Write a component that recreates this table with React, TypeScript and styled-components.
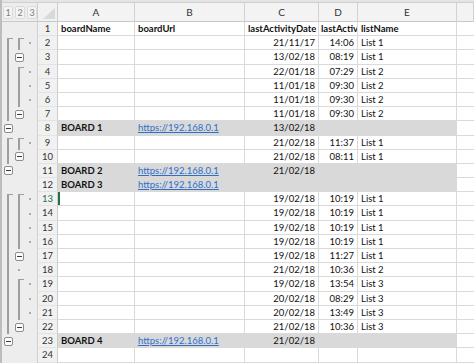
import * as React from 'react';
import styled, { createGlobalStyle } from 'styled-components';

const ROW_H = 14.2;
const COLS = '36px 20px 77px 110px 74px 39px 99px 1fr';
const URL = 'https://192.168.0.1';

type Mark = 'none' | 'start' | 'line' | 'minus' | 'dot';

type RowData = {
  n: number;
  a?: string;
  b?: string;
  c?: string;
  d?: string;
  e?: string;
  band?: boolean;
  header?: boolean;
  active?: boolean;
  o: [Mark, Mark, Mark];
};

// row 1 holds the column names, D's is cut by the narrow column
const rows: RowData[] = [
  { n: 1, header: true, a: 'boardName', b: 'boardUrl', c: 'lastActivityDate', d: 'lastActivi', e: 'listName', o: ['none', 'none', 'none'] },
  { n: 2, c: '21/11/17', d: '14:06', e: 'List 1', o: ['start', 'start', 'dot'] },
  { n: 3, c: '13/02/18', d: '08:19', e: 'List 1', o: ['line', 'minus', 'none'] },
  { n: 4, c: '22/01/18', d: '07:29', e: 'List 2', o: ['line', 'start', 'dot'] },
  { n: 5, c: '11/01/18', d: '09:30', e: 'List 2', o: ['line', 'line', 'dot'] },
  { n: 6, c: '11/01/18', d: '09:30', e: 'List 2', o: ['line', 'line', 'dot'] },
  { n: 7, c: '11/01/18', d: '09:30', e: 'List 2', o: ['line', 'minus', 'none'] },
  { n: 8, a: 'BOARD 1', b: URL, c: '13/02/18', band: true, o: ['minus', 'none', 'none'] },
  { n: 9, c: '21/02/18', d: '11:37', e: 'List 1', o: ['start', 'start', 'dot'] },
  { n: 10, c: '21/02/18', d: '08:11', e: 'List 1', o: ['line', 'minus', 'none'] },
  { n: 11, a: 'BOARD 2', b: URL, c: '21/02/18', band: true, o: ['minus', 'none', 'none'] },
  { n: 12, a: 'BOARD 3', b: URL, band: true, o: ['none', 'none', 'none'] },
  { n: 13, c: '19/02/18', d: '10:19', e: 'List 1', active: true, o: ['start', 'start', 'dot'] },
  { n: 14, c: '19/02/18', d: '10:19', e: 'List 1', o: ['line', 'line', 'dot'] },
  { n: 15, c: '19/02/18', d: '10:19', e: 'List 1', o: ['line', 'line', 'dot'] },
  { n: 16, c: '19/02/18', d: '10:19', e: 'List 1', o: ['line', 'line', 'dot'] },
  { n: 17, c: '19/02/18', d: '11:27', e: 'List 1', o: ['line', 'minus', 'none'] },
  { n: 18, c: '21/02/18', d: '10:36', e: 'List 2', o: ['line', 'dot', 'none'] },
  { n: 19, c: '19/02/18', d: '13:54', e: 'List 3', o: ['line', 'start', 'dot'] },
  { n: 20, c: '20/02/18', d: '08:29', e: 'List 3', o: ['line', 'line', 'dot'] },
  { n: 21, c: '20/02/18', d: '13:49', e: 'List 3', o: ['line', 'line', 'dot'] },
  { n: 22, c: '21/02/18', d: '10:36', e: 'List 3', o: ['line', 'minus', 'none'] },
  { n: 23, a: 'BOARD 4', b: URL, c: '21/02/18', band: true, o: ['minus', 'none', 'none'] },
  { n: 24, o: ['none', 'none', 'none'] },
];

const GlobalStyle = createGlobalStyle`
  html, body {
    margin: 0;
    padding: 0;
    background: #fff;
  }
  body {
    font-family: Lato, "Liberation Sans", sans-serif;
    color: #111;
  }
`;

const Sheet = styled.div`
  width: 474px;
  height: 363px;
  overflow: hidden;
  display: flex;
  flex-direction: column;
  border-left: 2px solid #bdbdbd;
  box-sizing: border-box;
`;

const TopStrip = styled.div`
  height: 3px;
  flex-shrink: 0;
  background: #e4e4e4;
  border-bottom: 1px solid #cfcfcf;
  box-sizing: border-box;
`;

const Row = styled.div<{ $h: number }>`
  display: grid;
  grid-template-columns: ${COLS};
  height: ${p => p.$h}px;
  flex-shrink: 0;
`;

const Gutter = styled.div`
  background: #ededed;
  border-right: 1px solid #d0d0d0;
  display: flex;
  padding-left: 2px;
`;

const GutterHead = styled(Gutter)`
  align-items: center;
  gap: 2px;
  padding-left: 1px;
  border-bottom: 1px solid #c8c8c8;
`;

const LevelButton = styled.div`
  width: 9px;
  height: 11px;
  border: 1px solid #dadada;
  border-radius: 2px;
  background: #f4f4f4;
  color: #7d7d7d;
  font-size: 9px;
  line-height: 11px;
  text-align: center;
`;

const Slot = styled.div<{ $center?: boolean }>`
  width: 11px;
  display: flex;
  flex-direction: column;
  align-items: flex-start;
  justify-content: ${p => (p.$center ? 'center' : 'flex-start')};
`;

const Rule = styled.div`
  margin-left: 3px;
  width: 2px;
  flex: 1;
  background: #9e9e9e;
`;

const Tick = styled.div`
  margin: 2px 0 0 3px;
  width: 4px;
  flex: 1;
  border-left: 2px solid #9e9e9e;
  border-top: 1px solid #9e9e9e;
`;

const Spacer = styled.div`
  flex: 1;
`;

const MinusBox = styled.div`
  flex-shrink: 0;
  width: 9px;
  height: 9px;
  border: 1px solid #8d8d8d;
  border-radius: 2px;
  background: #fbfbfb;
  box-sizing: border-box;
  display: flex;
  align-items: center;
  justify-content: center;
`;

const MinusBar = styled.div`
  width: 5px;
  height: 1px;
  background: #3c3c3c;
`;

const Dot = styled.div`
  margin-left: 3px;
  width: 2px;
  height: 2px;
  background: #aaa;
`;

const RowHead = styled.div<{ $active?: boolean }>`
  background: #f1f1f1;
  border-right: 1px solid #cdcdcd;
  border-bottom: 1px solid #e3e3e3;
  box-sizing: border-box;
  color: ${p => (p.$active ? '#217346' : '#333')};
  font-size: 9.5px;
  line-height: ${ROW_H - 1}px;
  text-align: center;
`;

const Corner = styled.div`
  background: #f1f1f1;
  border-right: 1px solid #cdcdcd;
  border-bottom: 1px solid #c8c8c8;
  box-sizing: border-box;
  display: flex;
  align-items: flex-end;
  justify-content: flex-end;
  padding: 0 2px 2px 0;
`;

const CornerTriangle = styled.div`
  width: 0;
  height: 0;
  border-left: 12px solid transparent;
  border-bottom: 11px solid #d9d9d9;
`;

const ColHead = styled.div`
  background: #f3f3f3;
  border-right: 1px solid #d2d2d2;
  border-bottom: 1px solid #c8c8c8;
  box-sizing: border-box;
  color: #333;
  font-size: 10px;
  line-height: 18px;
  text-align: center;
`;

const Cell = styled.div<{ $right?: boolean; $band?: boolean; $bold?: boolean; $active?: boolean; $last?: boolean }>`
  background: ${p => (p.$band ? '#d9d9d9' : '#fff')};
  border-right: ${p => (p.$last ? 'none' : `1px solid ${p.$band ? '#d9d9d9' : '#dadada'}`)};
  border-bottom: 1px solid ${p => (p.$band ? '#d9d9d9' : '#dadada')};
  box-sizing: border-box;
  padding: 0 3px;
  font-size: 9.5px;
  line-height: ${ROW_H - 1}px;
  font-weight: ${p => (p.$bold ? 700 : 400)};
  text-align: ${p => (p.$right ? 'right' : 'left')};
  white-space: nowrap;
  overflow: hidden;
  text-overflow: clip;
  box-shadow: ${p => (p.$active ? 'inset 2px 0 0 #217346' : 'none')};
`;

const NarrowCell = styled(Cell)`
  padding: 0 ${p => (p.$right ? 3 : 0)}px 0 2px;
`;

const Link = styled.span`
  color: #2f6fca;
  text-decoration: underline;
`;

function OutlineMark({ kind }: { kind: Mark }) {
  if (kind === 'line') return <Slot><Rule /></Slot>;
  if (kind === 'start') return <Slot><Tick /></Slot>;
  if (kind === 'dot') return <Slot $center><Dot /></Slot>;
  if (kind === 'minus')
    return (
      <Slot>
        <Spacer />
        <MinusBox><MinusBar /></MinusBox>
        <Spacer />
      </Slot>
    );
  return <Slot />;
}

function DataRow({ r }: { r: RowData }) {
  const bold = r.header || r.band;
  return (
    <Row $h={ROW_H}>
      <Gutter>
        {r.o.map((m, i) => <OutlineMark key={i} kind={m} />)}
      </Gutter>
      <RowHead $active={r.active}>{r.n}</RowHead>
      <Cell $band={r.band} $bold={bold} $active={r.active}>{r.a}</Cell>
      <Cell $band={r.band} $bold={r.header}>{r.b && (r.header ? r.b : <Link>{r.b}</Link>)}</Cell>
      <Cell $band={r.band} $bold={r.header} $right={!r.header}>{r.c}</Cell>
      <NarrowCell $band={r.band} $bold={r.header} $right={!r.header}>{r.d}</NarrowCell>
      <Cell $band={r.band} $bold={r.header}>{r.e}</Cell>
      <Cell $last />
    </Row>
  );
}

export default function App() {
  return (
    <>
      <GlobalStyle />
      <Sheet>
        <TopStrip />
        <Row $h={19}>
          <GutterHead>
            <LevelButton>1</LevelButton>
            <LevelButton>2</LevelButton>
            <LevelButton>3</LevelButton>
          </GutterHead>
          <Corner><CornerTriangle /></Corner>
          {['A', 'B', 'C', 'D', 'E', ''].map(l => <ColHead key={l}>{l}</ColHead>)}
        </Row>
        {rows.map(r => <DataRow key={r.n} r={r} />)}
      </Sheet>
    </>
  );
}
